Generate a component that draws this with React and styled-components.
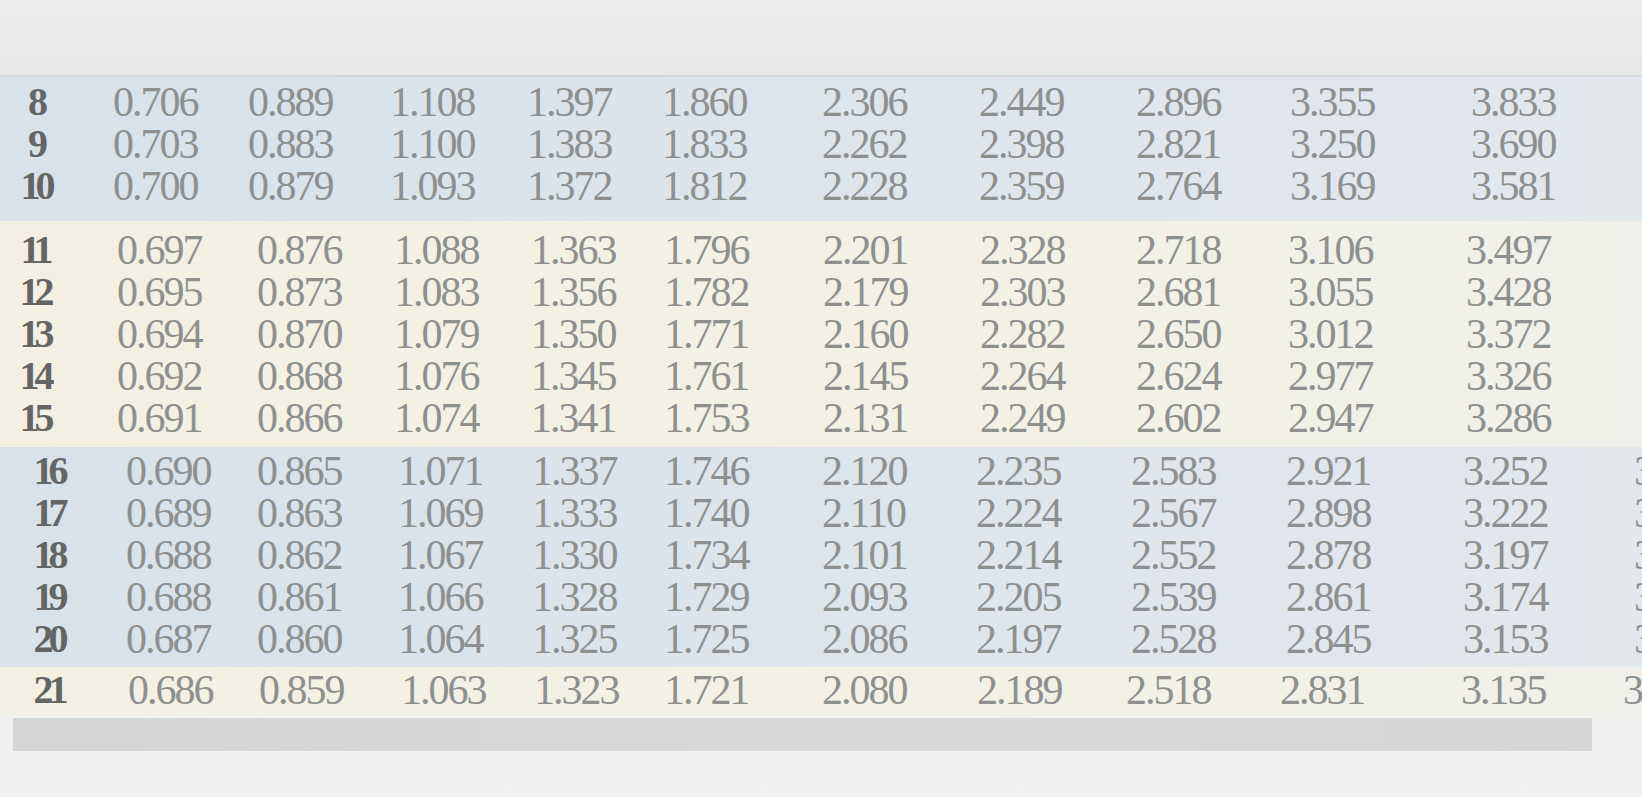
import styled, { createGlobalStyle } from "styled-components";

const GlobalStyle = createGlobalStyle`
  html, body {
    margin: 0;
    padding: 0;
    width: 1642px;
    height: 797px;
    overflow: hidden;
    background: #eceeeb;
    font-family: "Liberation Serif", "Times New Roman", serif;
  }
`;

// left edge of every value column, per band (the photo is a little skewed)
const toTemplate = (lefts) =>
  lefts
    .map((x, i) => (i === 0 ? x : x - lefts[i - 1]) + "px")
    .concat("160px")
    .join(" ");

const Page = styled.div`
  width: 1642px;
  height: 797px;
  display: flex;
  flex-direction: column;
  padding-top: 75px;
  box-sizing: border-box;
  background: linear-gradient(180deg, #ecedea 0px, #e7e9e6 75px, #eef0ee 76px, #f1f2f0 797px);
  overflow: hidden;
`;

const Table = styled.div`
  display: flex;
  flex-direction: column;
`;

const Band = styled.div`
  display: flex;
  flex-direction: column;
  padding: ${(p) => p.$pt}px 0 ${(p) => p.$pb}px;
  background: ${(p) =>
    p.$tone === "blue"
      ? "linear-gradient(90deg, #d9e2e9 0%, #dee5eb 55%, #e3e8ed 100%)"
      : "linear-gradient(90deg, #f3f0e3 0%, #f3f1e6 60%, #f0f0ea 100%)"};
  border-top: ${(p) => (p.$first ? "2px solid #d3d8da" : "none")};
`;

const Row = styled.div`
  display: grid;
  grid-template-columns: ${(p) => p.$cols};
  height: 42px;
  align-items: center;
  white-space: nowrap;
`;

const Label = styled.div`
  width: ${(p) => p.$center * 2}px;
  font-size: 40px;
  font-weight: 700;
  color: #646665;
  text-align: center;
  letter-spacing: -5px;
  text-indent: -5px;
  line-height: 34px;
`;

const Cell = styled.div`
  font-size: 42px;
  color: #8e9090;
  letter-spacing: -2px;
  line-height: 34px;
`;

const GrayBar = styled.div`
  height: 33px;
  margin: 4px 50px 0 13px;
  background: linear-gradient(90deg, #d4d6d6 0%, #d8dada 60%, #d5d7d7 100%);
`;

const bands = [
  {
    tone: "blue",
    pt: 4,
    pb: 14,
    label: 38,
    lefts: [113, 248, 390, 527, 662, 822, 979, 1136, 1290, 1471],
    rows: [
      ["8", "0.706", "0.889", "1.108", "1.397", "1.860", "2.306", "2.449", "2.896", "3.355", "3.833"],
      ["9", "0.703", "0.883", "1.100", "1.383", "1.833", "2.262", "2.398", "2.821", "3.250", "3.690"],
      ["10", "0.700", "0.879", "1.093", "1.372", "1.812", "2.228", "2.359", "2.764", "3.169", "3.581"],
    ],
  },
  {
    tone: "cream",
    pt: 8,
    pb: 8,
    label: 37,
    lefts: [117, 257, 394, 531, 664, 823, 980, 1136, 1288, 1466],
    rows: [
      ["11", "0.697", "0.876", "1.088", "1.363", "1.796", "2.201", "2.328", "2.718", "3.106", "3.497"],
      ["12", "0.695", "0.873", "1.083", "1.356", "1.782", "2.179", "2.303", "2.681", "3.055", "3.428"],
      ["13", "0.694", "0.870", "1.079", "1.350", "1.771", "2.160", "2.282", "2.650", "3.012", "3.372"],
      ["14", "0.692", "0.868", "1.076", "1.345", "1.761", "2.145", "2.264", "2.624", "2.977", "3.326"],
      ["15", "0.691", "0.866", "1.074", "1.341", "1.753", "2.131", "2.249", "2.602", "2.947", "3.286"],
    ],
  },
  {
    tone: "blue",
    pt: 3,
    pb: 7,
    label: 51,
    lefts: [126, 257, 398, 532, 664, 822, 976, 1131, 1286, 1463, 1634],
    rows: [
      ["16", "0.690", "0.865", "1.071", "1.337", "1.746", "2.120", "2.235", "2.583", "2.921", "3.252", "3.686"],
      ["17", "0.689", "0.863", "1.069", "1.333", "1.740", "2.110", "2.224", "2.567", "2.898", "3.222", "3.646"],
      ["18", "0.688", "0.862", "1.067", "1.330", "1.734", "2.101", "2.214", "2.552", "2.878", "3.197", "3.610"],
      ["19", "0.688", "0.861", "1.066", "1.328", "1.729", "2.093", "2.205", "2.539", "2.861", "3.174", "3.579"],
      ["20", "0.687", "0.860", "1.064", "1.325", "1.725", "2.086", "2.197", "2.528", "2.845", "3.153", "3.552"],
    ],
  },
  {
    tone: "cream",
    pt: 2,
    pb: 3,
    label: 51,
    lefts: [128, 259, 401, 534, 664, 822, 977, 1126, 1280, 1461, 1623],
    rows: [
      ["21", "0.686", "0.859", "1.063", "1.323", "1.721", "2.080", "2.189", "2.518", "2.831", "3.135", "3.527"],
    ],
  },
];

export default function App() {
  return (
    <>
      <GlobalStyle />
      <Page>
        <Table>
          {bands.map((band, bi) => {
            const cols = toTemplate(band.lefts);
            return (
              <Band key={bi} $tone={band.tone} $pt={band.pt} $pb={band.pb} $first={bi === 0}>
                {band.rows.map(([df, ...values]) => (
                  <Row key={df} $cols={cols}>
                    <Label $center={band.label}>{df}</Label>
                    {values.map((v, i) => (
                      <Cell key={i}>{v}</Cell>
                    ))}
                  </Row>
                ))}
              </Band>
            );
          })}
        </Table>
        <GrayBar />
      </Page>
    </>
  );
}
